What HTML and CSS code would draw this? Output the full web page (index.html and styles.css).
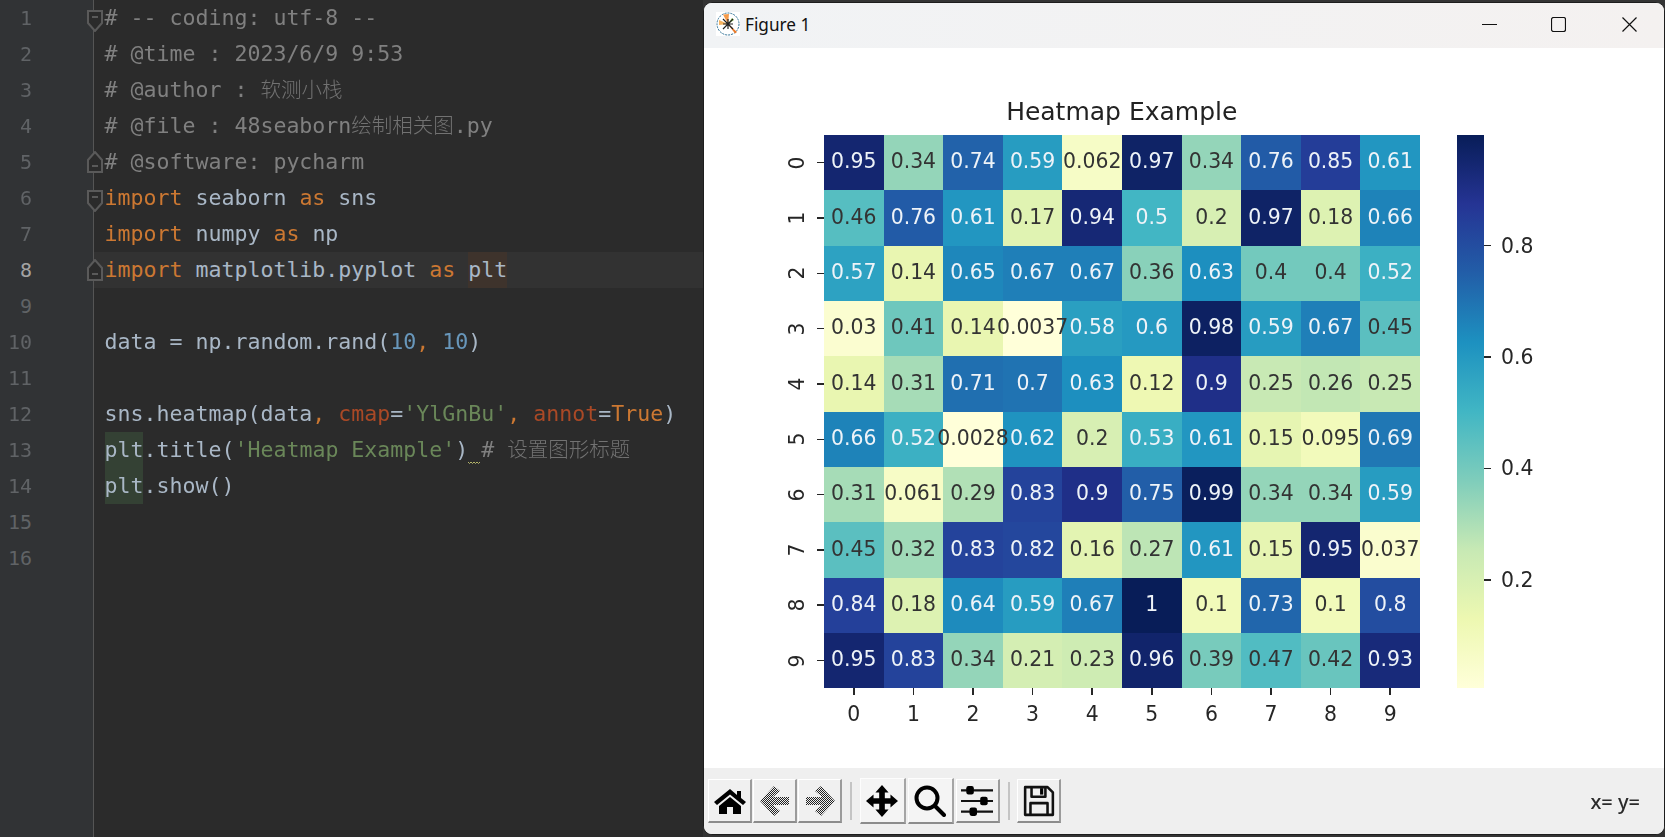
FILE: index.html
```html
<!DOCTYPE html>
<html lang="en">
<head>
<meta charset="utf-8">
<title>Figure 1</title>
<link rel="stylesheet" href="styles.css">
</head>
<body>
<svg class="defs" width="0" height="0"><defs>
  <pattern id="dither" width="2" height="2" patternUnits="userSpaceOnUse"><rect width="1" height="1" fill="#222"/><rect x="1" y="1" width="1" height="1" fill="#222"/></pattern>
</defs></svg>
<main class="editor">
  <div class="line"><span class="num">1</span><svg class="fold" viewBox="0 0 16 22"><path d="M1 1H15V13L8 21L1 13Z"/><path d="M5 7H11"/></svg><code class="cm"># -- coding: utf-8 --</code></div>
  <div class="line"><span class="num">2</span><code class="cm"># @time : 2023/6/9 9:53</code></div>
  <div class="line"><span class="num">3</span><code class="cm"># @author : <span class="zh">软测小栈</span></code></div>
  <div class="line"><span class="num">4</span><code class="cm"># @file : 48seaborn<span class="zh">绘制相关图</span>.py</code></div>
  <div class="line"><span class="num">5</span><svg class="fold up" viewBox="0 0 16 22"><path d="M1 21H15V9L8 1L1 9Z"/><path d="M5 15H11"/></svg><code class="cm"># @software: pycharm</code></div>
  <div class="line"><span class="num">6</span><svg class="fold" viewBox="0 0 16 22"><path d="M1 1H15V13L8 21L1 13Z"/><path d="M5 7H11"/></svg><code><b>import</b> seaborn <b>as</b> sns</code></div>
  <div class="line"><span class="num">7</span><code><b>import</b> numpy <b>as</b> np</code></div>
  <div class="line current"><span class="num">8</span><svg class="fold up" viewBox="0 0 16 22"><path d="M1 21H15V9L8 1L1 9Z"/><path d="M5 15H11"/></svg><code><b>import</b> matplotlib.pyplot <b>as</b> <span class="unused">plt</span></code></div>
  <div class="line"><span class="num">9</span><code></code></div>
  <div class="line"><span class="num">10</span><code>data = np.random.rand(<i>10</i><b>,</b> <i>10</i>)</code></div>
  <div class="line"><span class="num">11</span><code></code></div>
  <div class="line"><span class="num">12</span><code>sns.heatmap(data<b>,</b> <em>cmap</em>=<u>'YlGnBu'</u><b>,</b> <em>annot</em>=<b>True</b>)</code></div>
  <div class="line"><span class="num">13</span><code><span class="occ">plt</span>.title(<u>'Heatmap Example'</u>)<span class="weak"> <svg class="squiggle" viewBox="0 0 13 3"><path d="M0 1L1.5 2.5L3 1L4.5 2.5L6 1L7.5 2.5L9 1L10.5 2.5L12 1"/></svg></span><span class="cm"># <span class="zh">设置图形标题</span></span></code></div>
  <div class="line"><span class="num">14</span><code><span class="occ">plt</span>.show()</code></div>
  <div class="line"><span class="num">15</span><code></code></div>
  <div class="line"><span class="num">16</span><code></code></div>
  <div class="line filler"><span class="num"></span><code></code></div>
</main>

<div class="desk">
<section class="window">
  <header class="titlebar">
    <svg class="appicon" viewBox="0 0 24 24">
      <rect width="24" height="24" fill="#fff"/>
      <circle cx="12" cy="12" r="11" fill="none" stroke="#2c6f94" stroke-width="1" stroke-dasharray="2 1"/>
      <path d="M12 12L7 2.5L13 2Z" fill="#f59a4a"/>
      <path d="M12 12L3 8L3 13Z" fill="#f7b35f"/>
      <path d="M11 11L21 20L19 21.5Z" fill="#ea7a2a"/>
      <path d="M12 12L16 6L18 8Z" fill="#8cc152"/>
      <path d="M7 7L17 17M12 7V17M7 12H17M17 7L7 17" stroke="#222" stroke-width="1.2" fill="none"/>
    </svg>
    <span class="wintitle">Figure 1</span>
    <div class="winbtns">
      <svg viewBox="0 0 15 15"><path d="M0 7.5H15"/></svg>
      <svg viewBox="0 0 15 15"><rect x=".5" y=".5" width="14" height="14" rx="2"/></svg>
      <svg viewBox="0 0 15 15"><path d="M.5 .5L14.5 14.5M14.5 .5L.5 14.5"/></svg>
    </div>
  </header>

  <div class="figure">
    <h1 class="plot-title">Heatmap Example</h1>
    <div class="plot">
      <div class="yaxis">
        <div class="ytick"><span>0</span><i></i></div>
        <div class="ytick"><span>1</span><i></i></div>
        <div class="ytick"><span>2</span><i></i></div>
        <div class="ytick"><span>3</span><i></i></div>
        <div class="ytick"><span>4</span><i></i></div>
        <div class="ytick"><span>5</span><i></i></div>
        <div class="ytick"><span>6</span><i></i></div>
        <div class="ytick"><span>7</span><i></i></div>
        <div class="ytick"><span>8</span><i></i></div>
        <div class="ytick"><span>9</span><i></i></div>
      </div>
      <div class="heat" id="heat">
        <div class="cell hi">0.95</div><div class="cell">0.34</div><div class="cell hi">0.74</div><div class="cell hi">0.59</div><div class="cell">0.062</div><div class="cell hi">0.97</div><div class="cell">0.34</div><div class="cell hi">0.76</div><div class="cell hi">0.85</div><div class="cell hi">0.61</div>
        <div class="cell">0.46</div><div class="cell hi">0.76</div><div class="cell hi">0.61</div><div class="cell">0.17</div><div class="cell hi">0.94</div><div class="cell hi">0.5</div><div class="cell">0.2</div><div class="cell hi">0.97</div><div class="cell">0.18</div><div class="cell hi">0.66</div>
        <div class="cell hi">0.57</div><div class="cell">0.14</div><div class="cell hi">0.65</div><div class="cell hi">0.67</div><div class="cell hi">0.67</div><div class="cell">0.36</div><div class="cell hi">0.63</div><div class="cell">0.4</div><div class="cell">0.4</div><div class="cell hi">0.52</div>
        <div class="cell">0.03</div><div class="cell">0.41</div><div class="cell">0.14</div><div class="cell">0.0037</div><div class="cell hi">0.58</div><div class="cell hi">0.6</div><div class="cell hi">0.98</div><div class="cell hi">0.59</div><div class="cell hi">0.67</div><div class="cell">0.45</div>
        <div class="cell">0.14</div><div class="cell">0.31</div><div class="cell hi">0.71</div><div class="cell hi">0.7</div><div class="cell hi">0.63</div><div class="cell">0.12</div><div class="cell hi">0.9</div><div class="cell">0.25</div><div class="cell">0.26</div><div class="cell">0.25</div>
        <div class="cell hi">0.66</div><div class="cell hi">0.52</div><div class="cell">0.0028</div><div class="cell hi">0.62</div><div class="cell">0.2</div><div class="cell hi">0.53</div><div class="cell hi">0.61</div><div class="cell">0.15</div><div class="cell">0.095</div><div class="cell hi">0.69</div>
        <div class="cell">0.31</div><div class="cell">0.061</div><div class="cell">0.29</div><div class="cell hi">0.83</div><div class="cell hi">0.9</div><div class="cell hi">0.75</div><div class="cell hi">0.99</div><div class="cell">0.34</div><div class="cell">0.34</div><div class="cell hi">0.59</div>
        <div class="cell">0.45</div><div class="cell">0.32</div><div class="cell hi">0.83</div><div class="cell hi">0.82</div><div class="cell">0.16</div><div class="cell">0.27</div><div class="cell hi">0.61</div><div class="cell">0.15</div><div class="cell hi">0.95</div><div class="cell">0.037</div>
        <div class="cell hi">0.84</div><div class="cell">0.18</div><div class="cell hi">0.64</div><div class="cell hi">0.59</div><div class="cell hi">0.67</div><div class="cell hi">1</div><div class="cell">0.1</div><div class="cell hi">0.73</div><div class="cell">0.1</div><div class="cell hi">0.8</div>
        <div class="cell hi">0.95</div><div class="cell hi">0.83</div><div class="cell">0.34</div><div class="cell">0.21</div><div class="cell">0.23</div><div class="cell hi">0.96</div><div class="cell">0.39</div><div class="cell">0.47</div><div class="cell">0.42</div><div class="cell hi">0.93</div>
      </div>
      <div class="cbar"></div>
      <div class="cticks">
        <div class="ctick"><i></i><span>0.8</span></div>
        <div class="ctick"><i></i><span>0.6</span></div>
        <div class="ctick"><i></i><span>0.4</span></div>
        <div class="ctick"><i></i><span>0.2</span></div>
      </div>
    </div>
    <div class="xaxis">
      <div class="xtick"><i></i><span>0</span></div>
      <div class="xtick"><i></i><span>1</span></div>
      <div class="xtick"><i></i><span>2</span></div>
      <div class="xtick"><i></i><span>3</span></div>
      <div class="xtick"><i></i><span>4</span></div>
      <div class="xtick"><i></i><span>5</span></div>
      <div class="xtick"><i></i><span>6</span></div>
      <div class="xtick"><i></i><span>7</span></div>
      <div class="xtick"><i></i><span>8</span></div>
      <div class="xtick"><i></i><span>9</span></div>
    </div>
  </div>

  <footer class="toolbar">
    <button class="tool"><svg viewBox="0 0 32 26"><path d="M16 1L0 14L3 17L16 6.5L29 17L32 14L27 10V3H23V7Z"/><path d="M16 9L5 18V26H13V19H19V26H27V18Z"/></svg></button>
    <button class="tool"><svg viewBox="0 0 30 32"><path class="dim" d="M0 16L14 1L20 6L13 12H29V20H13L20 26L14 31Z"/></svg></button>
    <button class="tool"><svg viewBox="0 0 30 32"><path class="dim" d="M30 16L16 1L10 6L17 12H1V20H17L10 26L16 31Z"/></svg></button>
    <span class="sep"></span>
    <button class="tool check"><svg viewBox="0 0 34 34"><path d="M17 0L24 8H20V14H26V10L34 17L26 24V20H20V26H24L17 34L10 26H14V20H8V24L0 17L8 10V14H14V8H10Z"/></svg></button>
    <button class="tool check"><svg viewBox="0 0 32 32"><circle class="ln" cx="13" cy="13" r="10.5"/><path class="ln" d="M21 21L30 30"/></svg></button>
    <button class="tool"><svg viewBox="0 0 30 28"><path class="thin" d="M0 4H30M0 14H30M0 24H30"/><rect x="5" y="0" width="7" height="8" rx="2"/><rect x="18" y="10" width="7" height="8" rx="2"/><rect x="8" y="20" width="7" height="8" rx="2"/></svg></button>
    <span class="sep"></span>
    <button class="tool"><svg viewBox="0 0 30 30"><path class="ln2" d="M2 2H23L28 7V28H2Z"/><path class="ln2" d="M8 2V11H21V2"/><path class="ln2" d="M7 28V17H23V28"/><rect x="16" y="3" width="3" height="6"/></svg></button>
    <span class="coords">x= y=</span>
  </footer>
</section>
</div>
<script src="script.js"></script>
</body>
</html>
```
FILE: styles.css
```css
* { box-sizing: border-box; }
html, body { margin: 0; height: 837px; overflow: hidden; }
body { display: flex; background: #2b2b2b; font-family: "DejaVu Sans", sans-serif; }
.defs { position: absolute; }

/* editor */
.editor {
  width: 703px;
  flex: none;
  display: flex;
  flex-direction: column;
  overflow: hidden;
  font-family: "DejaVu Sans Mono", "Noto Sans CJK SC", monospace;
  filter: blur(.3px);
}
.line { display: flex; height: 36px; flex: none; position: relative; line-height: 36px; }
.line.filler { flex: 1; }
.num {
  width: 94px;
  flex: none;
  padding-right: 61px;
  text-align: right;
  background: #313335;
  border-right: 1px solid #555;
  color: #606366;
  font-size: 20px;
}
.current .num { color: #a4a3a3; }
code {
  flex: 1;
  padding-left: 10.5px;
  font: inherit;
  font-size: 21.58px;
  color: #a9b7c6;
  white-space: pre;
}
.current code { background: #323232; }
.cm { color: #808080; }
.zh { font-size: 20.5px; line-height: 0; color: #727272; font-family: "Noto Sans CJK SC", sans-serif; font-weight: 300; }
code b { font-weight: normal; color: #cc7832; }
code i { font-style: normal; color: #6897bb; }
code em { font-style: normal; color: #aa4926; }
code u { text-decoration: none; color: #6a8759; }
.unused { background: #3e332c; display: inline-block; height: 36px; }
.occ { background: #344134; display: inline-block; height: 36px; }
.fold {
  position: absolute;
  left: 87px;
  top: 10px;
  width: 16px;
  height: 22px;
  fill: #2b2b2b;
  stroke: #5a5a5a;
  stroke-width: 2;
}
.fold.up { top: 7px; }
.weak { position: relative; }
.squiggle {
  position: absolute;
  left: 0;
  bottom: -2px;
  width: 13px;
  height: 3px;
  fill: none;
  stroke: #b5b56a;
  stroke-width: 1;
}

/* window */
.desk { flex: 1; background: #343434; padding: 2px 0; }
.window {
  height: 833px;
  display: flex;
  flex-direction: column;
  border: 1px solid #1d1d1d;
  border-radius: 9px;
  overflow: hidden;
  background: #fff;
}
.titlebar {
  height: 45px;
  flex: none;
  display: flex;
  align-items: center;
  padding: 0 27px 3px 12px;
  background: linear-gradient(to right, #f1f3f5, #f4f1f0);
}
.appicon { width: 24px; height: 24px; margin-right: 5px; }
.wintitle { font-family: "Noto Sans", sans-serif; font-size: 17.2px; color: #111; }
.winbtns { margin-left: auto; display: flex; gap: 54px; }
.winbtns svg { width: 15px; height: 15px; fill: none; stroke: #111; stroke-width: 1.2; }
.winbtns svg:last-child { margin-left: 2px; }

/* figure */
.figure { flex: 1; display: flex; flex-direction: column; padding-left: 120px; filter: blur(.45px); }
.plot-title {
  width: 595.5px;
  height: 87px;
  margin: 0;
  padding-bottom: 9px;
  display: flex;
  align-items: flex-end;
  justify-content: center;
  font-size: 25px;
  line-height: 28px;
  font-weight: normal;
  color: #222;
}
.plot { display: flex; height: 553.3px; margin-left: -120px; }
.yaxis { width: 120px; flex: none; display: flex; flex-direction: column; }
.ytick { flex: 1; display: flex; align-items: center; justify-content: flex-end; font-size: 20.4px; color: #262626; }
.ytick span { width: 20px; margin-right: 10px; text-align: center; transform: rotate(-90deg); line-height: 20px; }
.ytick i { width: 7px; height: 1.6px; background: #262626; }
.heat {
  width: 596px;
  flex: none;
  display: grid;
  grid-template-columns: repeat(10, minmax(0, 1fr));
  grid-template-rows: repeat(10, minmax(0, 1fr));
}
.cell {
  display: flex;
  align-items: center;
  justify-content: center;
  padding-bottom: 2.5px;
  font-size: 20.4px;
  color: #333;
  white-space: nowrap;
}
.cell.hi { color: #eef3f8; }
.cell span { position: relative; z-index: 1; }
.cbar {
  width: 27px;
  flex: none;
  margin-left: 37px;
  background: linear-gradient(to top, #ffffd9, #edf8b1 12.5%, #c7e9b4 25%, #7fcdbb 37.5%, #41b6c4 50%, #1d91c0 62.5%, #225ea8 75%, #253494 87.5%, #081d58);
}
.cticks { display: flex; flex-direction: column; padding-top: 55px; }
.ctick { height: 111.4px; display: flex; align-items: center; font-size: 20.4px; color: #262626; }
.ctick i { width: 7px; height: 1.6px; background: #262626; margin-right: 10px; }
.xaxis { width: 596px; display: grid; grid-template-columns: repeat(10, minmax(0, 1fr)); }
.xtick { display: flex; flex-direction: column; align-items: center; font-size: 20.4px; color: #262626; }
.xtick i { width: 1.6px; height: 7px; background: #262626; }
.xtick span { margin-top: 7px; line-height: 24px; }

/* toolbar */
.toolbar {
  height: 66px;
  flex: none;
  display: flex;
  align-items: center;
  padding: 0 24px 0 4px;
  background: #efefef;
  filter: blur(.3px);
}
.tool {
  width: 44px;
  height: 44px;
  flex: none;
  margin-right: 1px;
  padding: 0;
  display: flex;
  align-items: center;
  justify-content: center;
  background: #f0f0f0;
  border: 1px solid;
  border-color: #fff #9b9b9b #8c8c8c #fff;
  border-width: 1px 2px 2px 1px;
}
.tool.check { width: 46px; height: 46px; border-color: #fdfdfd #a5a5a5 #8c8c8c #fdfdfd; margin-right: 2px; background: #f4f4f4; }
.tool svg { width: 32px; height: 32px; fill: #000; }
.tool .dim { fill: url(#dither); }
.tool .ln { fill: none; stroke: #000; stroke-width: 4; stroke-linecap: round; }
.tool .ln2 { fill: none; stroke: #111; stroke-width: 2.4; stroke-linejoin: round; }
.tool .thin { fill: none; stroke: #111; stroke-width: 2; }
.sep { width: 2px; height: 38px; background: #c4c4c4; margin: 0 7.5px 0 7px; flex: none; }
.coords {
  margin-left: auto;
  font-family: "Noto Sans", sans-serif;
  font-size: 20px;
  font-weight: 500;
  color: #2a2a2a;
}
```
FILE: script.js
```js
// Colour every heatmap cell from its value, using matplotlib's YlGnBu colormap.
const STOPS = [
  [255, 255, 217], [237, 248, 177], [199, 233, 180], [127, 205, 187], [65, 182, 196],
  [29, 145, 192], [34, 94, 168], [37, 52, 148], [8, 29, 88]
];
const VMIN = 0.0028;
const VMAX = 1;

function ylgnbu(value) {
  const t = Math.min(1, Math.max(0, (value - VMIN) / (VMAX - VMIN))) * (STOPS.length - 1);
  const i = Math.min(STOPS.length - 2, Math.floor(t));
  const f = t - i;
  const rgb = STOPS[i].map((c, k) => Math.round(c + (STOPS[i + 1][k] - c) * f));
  return `rgb(${rgb.join(",")})`;
}

document.querySelectorAll("#heat .cell").forEach((cell) => {
  const text = cell.textContent;
  cell.style.backgroundColor = ylgnbu(parseFloat(text));
  const label = document.createElement("span");
  label.textContent = text;
  cell.textContent = "";
  cell.appendChild(label);
});
```
